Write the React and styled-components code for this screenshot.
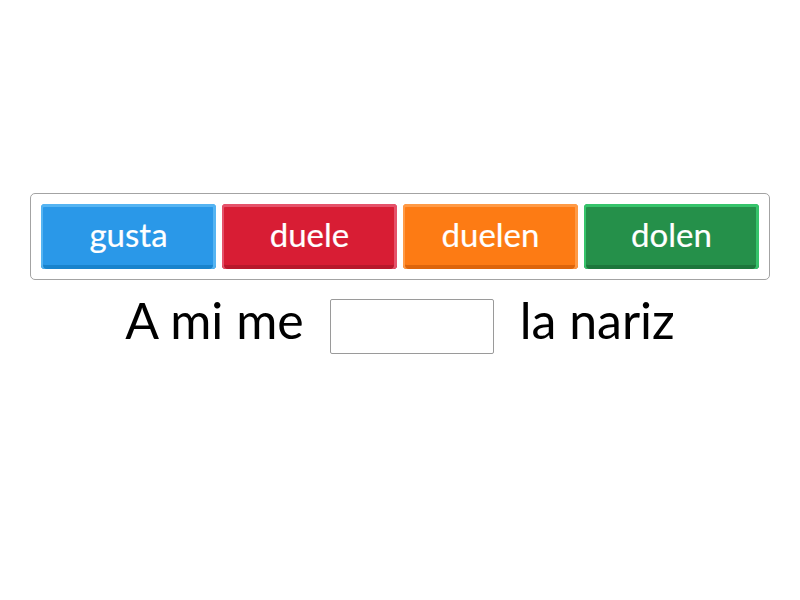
import React from "react";
import styled, { createGlobalStyle } from "styled-components";

const words = [
  { label: "gusta", base: "#2a98e8", light: "#55b4f2", dark: "#1983cc" },
  { label: "duele", base: "#d81d34", light: "#e5526a", dark: "#b8182b" },
  { label: "duelen", base: "#fd7b14", light: "#ff9a45", dark: "#dd650b" },
  { label: "dolen", base: "#25904a", light: "#36c46b", dark: "#1d773c" },
];

function App() {
  return (
    <>
      <GlobalStyle />
      <Page>
        <WordBank>
          {words.map((w) => (
            <Tile key={w.label} $base={w.base} $light={w.light} $dark={w.dark}>
              {w.label}
            </Tile>
          ))}
        </WordBank>
        <Sentence>
          <Words>A mi me</Words>
          <Gap />
          <Words>la nariz</Words>
        </Sentence>
      </Page>
    </>
  );
}

export default App;

const GlobalStyle = createGlobalStyle`
  body {
    margin: 0;
    background: #fff;
    font-family: Lato, "Open Sans", sans-serif;
  }
`;
const Page = styled.div`
  width: 800px;
  height: 600px;
  box-sizing: border-box;
  padding: 193px 30px 0;
`;
const WordBank = styled.div`
  display: grid;
  grid-template-columns: repeat(4, 1fr);
  gap: 6px;
  padding: 10px;
  border: 1px solid #a3a3a3;
  border-radius: 5px;
`;
const Tile = styled.div`
  height: 65px;
  display: flex;
  align-items: center;
  justify-content: center;
  border-radius: 4px;
  background: ${(p) => p.$base};
  box-shadow: inset 0 3px 0 ${(p) => p.$light},
    inset -3px 0 0 ${(p) => p.$light},
    inset 2px 0 0 ${(p) => p.$light},
    inset 0 -4px 0 ${(p) => p.$dark};
  color: #fff;
  font-size: 33px;
  font-weight: 400;
  padding-bottom: 6px;
  box-sizing: border-box;
  -webkit-text-stroke: 0.2px #fff;
`;
const Sentence = styled.div`
  display: flex;
  align-items: center;
  justify-content: center;
  gap: 26px;
  margin-top: 12px;
`;
const Words = styled.span`
  font-size: 50px;
  color: #000;
  line-height: 56px;
  padding-bottom: 12px;
`;
const Gap = styled.div`
  width: 162px;
  height: 53px;
  border: 1px solid #9a9a9a;
  border-radius: 2px;
`;
